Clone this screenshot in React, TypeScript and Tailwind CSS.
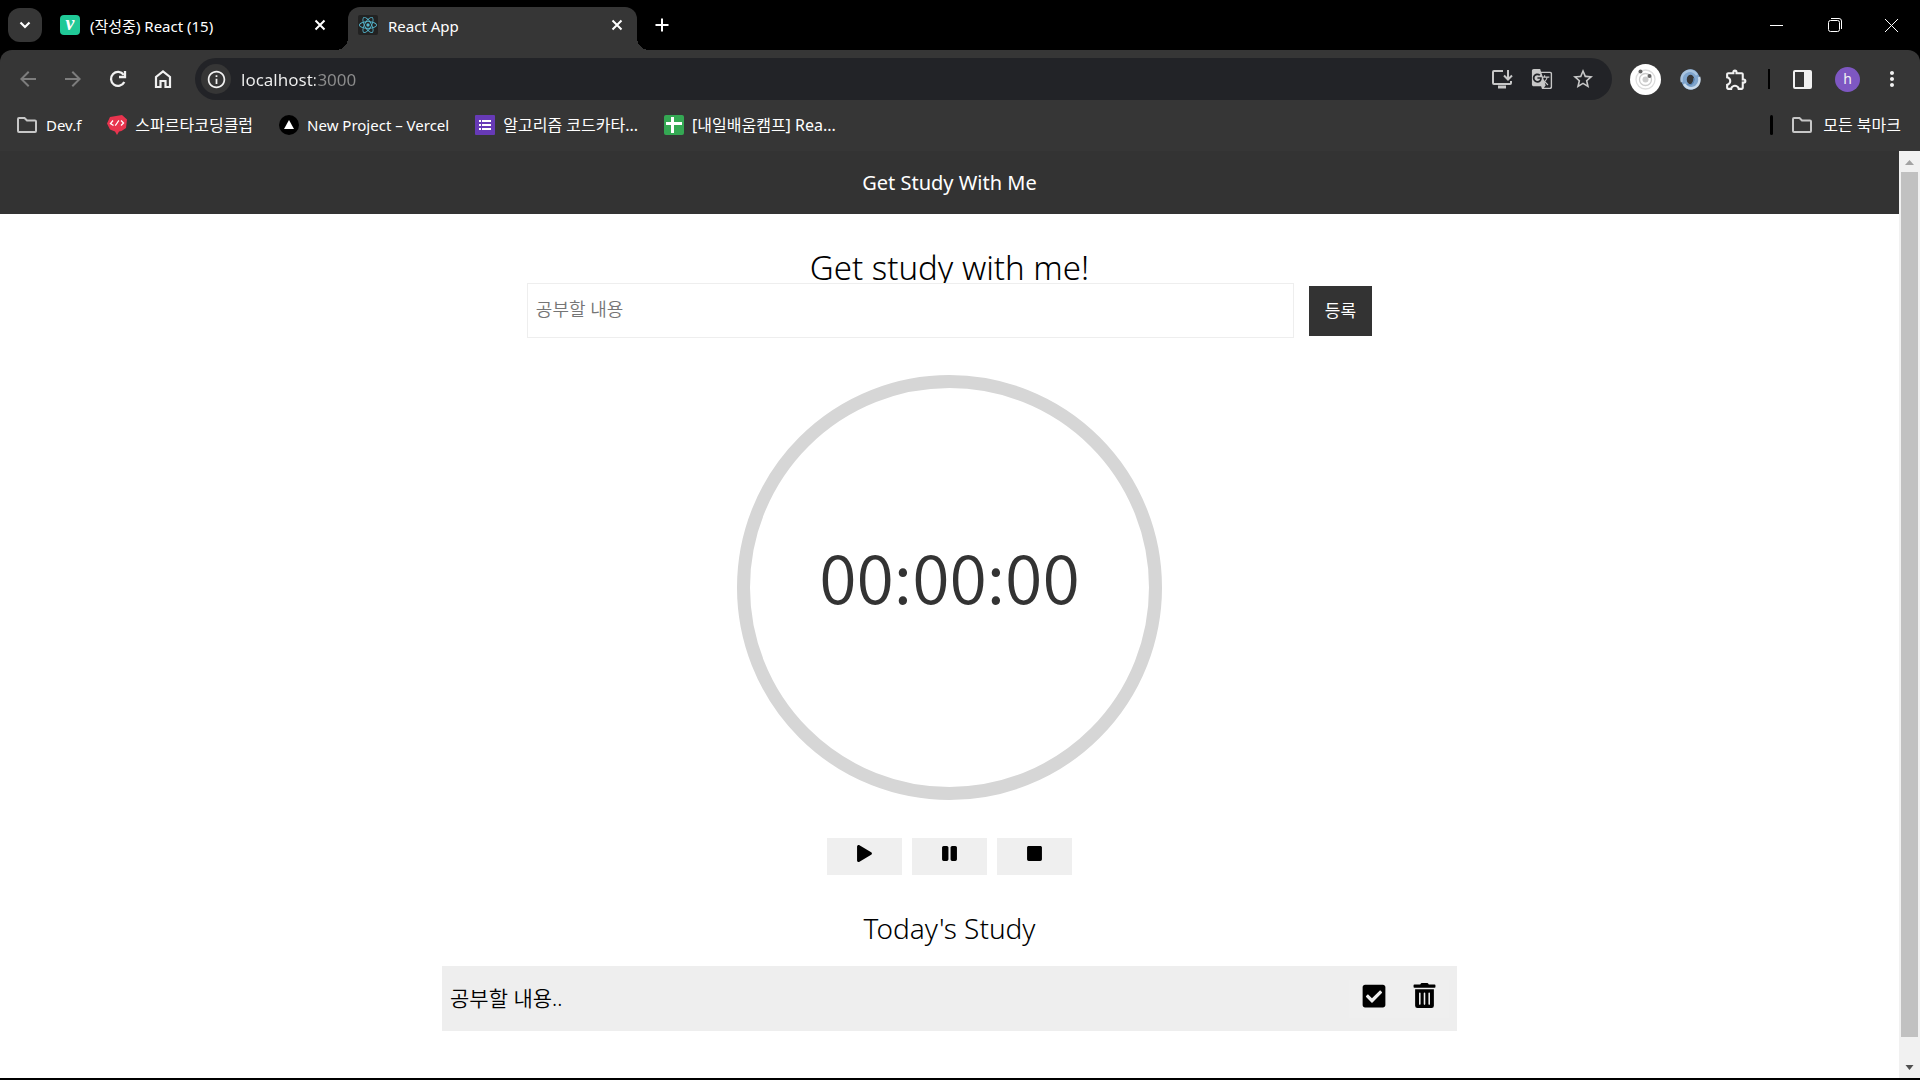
import React, { useState } from 'react';
import { FaPlay, FaPause, FaStop, FaCheckSquare, FaTrashAlt } from 'react-icons/fa';
import {
  MdArrowBack,
  MdArrowForward,
  MdOutlineInfo,
  MdStarBorder,
  MdOutlineExtension,
  MdMoreVert,
  MdGTranslate,
} from 'react-icons/md';
import { SiReact } from 'react-icons/si';

const CloseIcon = () => (
  <svg width="16" height="16" viewBox="0 0 16 16" fill="none" stroke="currentColor" strokeWidth="2">
    <path d="m3.500 3.500 9 9M12.500 3.500l-9 9" />
  </svg>
);

const ReloadIcon = () => (
  <svg width="24" height="24" viewBox="0 0 24 24" fill="none" stroke="currentColor" strokeWidth="2.300">
    <path d="M18.300 15a7 7 0 1 1-.6-7.200" />
    <path d="M19 4v6h-6" />
  </svg>
);

const HomeIcon = () => (
  <svg width="24" height="24" viewBox="0 0 24 24" fill="none" stroke="currentColor" strokeWidth="2.200">
    <path d="M5 10v10h4.500v-6h5v6H19V10l-7-5.500z" />
  </svg>
);

const FolderIcon = () => (
  <svg width="22" height="18" viewBox="0 0 22 18" fill="none" stroke="#c7c7c7" strokeWidth="2">
    <path d="M2 3a1 1 0 0 1 1-1h5.500l2.500 2.500h8a1 1 0 0 1 1 1V15a1 1 0 0 1-1 1H3a1 1 0 0 1-1-1z" />
  </svg>
);

const InstallIcon = () => (
  <svg width="22" height="20" viewBox="0 0 22 20" fill="none" stroke="#c7c7c7" strokeWidth="2">
    <path d="M12 2H3a1 1 0 0 0-1 1v11a1 1 0 0 0 1 1h16a1 1 0 0 0 1-1v-2" />
    <path d="M17 1v9M13 6.500l4 4 4-4" />
    <path d="M7 18h8" strokeWidth="3" />
  </svg>
);

const RadarIcon = () => (
  <svg width="31" height="31" viewBox="0 0 31 31" fill="none">
    <circle cx="15.500" cy="15.500" r="15.500" fill="#fff" />
    <circle cx="15.500" cy="15.500" r="9.500" stroke="#ddd" strokeWidth="1.300" />
    <circle cx="15.500" cy="15.500" r="6" stroke="#ccc" strokeWidth="1.300" />
    <circle cx="15.500" cy="15.500" r="3" fill="#ccc" />
    <circle cx="10.500" cy="7.500" r="2" fill="#666" />
    <circle cx="19.500" cy="12" r="2" fill="#666" />
  </svg>
);

const SwirlIcon = () => (
  <svg width="21" height="21" viewBox="0 0 21 21" fill="none">
    <ellipse cx="10.500" cy="10.500" rx="6.500" ry="7.500" stroke="#7fa5cd" strokeWidth="5.500" />
    <path d="M2 13a8.500 8.500 0 0 1 6-11c4-1 7 1 9 4" stroke="#a9c4df" strokeWidth="2.500" />
    <path d="M19 8a8.500 8.500 0 0 1-6 11c-4 1-7-1-9-4" stroke="#c9dbec" strokeWidth="2.500" />
    <path d="M7 15c4 2 7 0 7-6" stroke="#5b87b5" strokeWidth="1.200" />
  </svg>
);

const SidePanelIcon = () => (
  <svg width="19" height="19" viewBox="0 0 19 19">
    <rect x="1" y="1" width="17" height="17" rx="1" fill="none" stroke="#f1f1f1" strokeWidth="2" />
    <path d="M11 1h7v17h-7z" fill="#f1f1f1" />
  </svg>
);

const SpartaIcon = () => (
  <svg width="20" height="20" viewBox="0 0 20 20" fill="none">
    <path d="M3 2 15 0l5 4.500-1 8.500-4.500 3-2.500.5-2 3.500-2-3.500-5-2L0 8.500z" fill="#e8344e" />
    <path d="M6 5.500 3.500 8.500 6.500 10.500M14 5.500l2.500 2.500L14 10.500M8 10.500C9.500 10 10.500 6.500 12 5.500" stroke="#fff" strokeWidth="1.300" />
  </svg>
);

const VercelIcon = () => (
  <svg width="20" height="20" viewBox="0 0 20 20">
    <circle cx="10" cy="10" r="10" />
    <path d="m10 5 5 9H5z" fill="#fff" />
  </svg>
);

const FormsIcon = () => (
  <svg width="20" height="20" viewBox="0 0 20 20">
    <rect width="20" height="20" rx="1" fill="#673ab7" />
    <path d="M4 5h2v2H4zM7 5h9v2H7zM4 9h2v2H4zM7 9h9v2H7zM4 13h2v2H4zM7 13h9v2H7z" fill="#fff" />
  </svg>
);

const SheetsIcon = () => (
  <svg width="20" height="20" viewBox="0 0 20 20">
    <rect width="20" height="20" rx="2" fill="#34a853" />
    <path d="M7 2h3v5h8v3h-8v8H7v-8H2V7h5z" fill="#fff" />
  </svg>
);

const bookmarks = [
  { label: 'Dev.f', icon: <FolderIcon />, size: 'text-[15px]' },
  { label: '스파르타코딩클럽', icon: <SpartaIcon />, size: 'text-base' },
  { label: 'New Project – Vercel', icon: <VercelIcon />, size: 'text-[15px]' },
  { label: '알고리즘 코드카타...', icon: <FormsIcon />, size: 'text-base' },
  { label: '[내일배움캠프] Rea...', icon: <SheetsIcon />, size: 'text-base' },
];

function TabBar() {
  return (
    <div className="flex h-[50px] items-end bg-black text-white">
      <button aria-label="Search tabs" className="mb-2 ml-2 flex h-[34px] w-[34px] items-center justify-center rounded-xl bg-[#363636]">
        <svg width="12" height="8" viewBox="0 0 12 8" fill="none" stroke="#fff" strokeWidth="2.200"><path d="m1.500 1.500 4.500 4.500 4.500-4.500" /></svg>
      </button>
      <div className="ml-[18px] flex h-[50px] w-[268px] items-center">
        <span className="flex h-5 w-5 items-center justify-center rounded-sm bg-[#20c997] pb-1 font-['Liberation_Serif',serif] text-xl font-bold leading-none italic">v</span>
        <span className="ml-[10px] flex-1 pt-0.5 text-[15px]">(작성중) React (15)</span>
        <button aria-label="Close tab"><CloseIcon /></button>
      </div>
      <div className="relative ml-5 flex h-[43px] w-[289px] items-center rounded-t-xl bg-[#363636] px-[10px] pb-[7px]">
        <span className="absolute bottom-0 -left-3 h-3 w-3 bg-[radial-gradient(circle_at_top_left,transparent_12px,#363636_12px)]" />
        <span className="absolute -right-3 bottom-0 h-3 w-3 bg-[radial-gradient(circle_at_top_right,transparent_12px,#363636_12px)]" />
        <span className="flex h-5 w-5 items-center justify-center rounded-xs bg-[#222]"><SiReact size={18} className="text-[#55b8d0]" /></span>
        <span className="ml-[10px] flex-1 pt-0.5 text-[15px]">React App</span>
        <button aria-label="Close tab" className="mr-0.5"><CloseIcon /></button>
      </div>
      <button aria-label="New tab" className="mb-[17px] ml-[17px]">
        <svg width="16" height="16" viewBox="0 0 16 16" stroke="#fff" strokeWidth="2"><path d="M8 1.500v13M1.500 8h13" /></svg>
      </button>
      <div className="mb-[17px] ml-auto flex items-center gap-[42px] pr-[21px]">
        <button aria-label="Minimize" className="flex h-4 w-4 items-center"><span className="h-px w-[13px] bg-white" /></button>
        <button aria-label="Restore">
          <svg width="14" height="14" viewBox="0 0 14 14" fill="none" stroke="#fff"><rect x=".5" y="2.500" width="11" height="11" rx="2" /><path d="M3 .5h8a2.500 2.500 0 0 1 2.500 2.500v8" /></svg>
        </button>
        <button aria-label="Close">
          <svg width="15" height="15" viewBox="0 0 15 15" stroke="#fff"><path d="m1 1 13 13M14 1 1 14" /></svg>
        </button>
      </div>
    </div>
  );
}

function Toolbar() {
  return (
    <div className="bg-black">
      <div className="flex h-[58px] items-center rounded-t-xl bg-[#363636] px-4 text-[#f1f1f1]">
        <div className="flex w-[179px] items-center gap-[21px]">
          <button aria-label="Back" className="text-[#7d7d7d]"><MdArrowBack size={24} /></button>
          <button aria-label="Forward" className="text-[#7d7d7d]"><MdArrowForward size={24} /></button>
          <button aria-label="Reload"><ReloadIcon /></button>
          <button aria-label="Home"><HomeIcon /></button>
        </div>
        <div className="flex h-[42px] flex-1 items-center rounded-full bg-[#222327] pr-[17px] pl-[6px]">
          <button aria-label="Site information" className="flex h-[30px] w-[30px] items-center justify-center rounded-full bg-[#363636]"><MdOutlineInfo size={21} /></button>
          {/* host is bright, port is dimmed */}
          <input
            aria-label="Address"
            defaultValue="localhost:3000"
            className="ml-[10px] h-8 min-w-0 flex-1 bg-[linear-gradient(90deg,#f1f1f1_74px,#8d8d8d_74px)] bg-clip-text text-[17px] text-transparent caret-white outline-none"
          />
          <div className="flex items-center gap-[18px] text-[#c7c7c7]">
            <button aria-label="Install app"><InstallIcon /></button>
            <button aria-label="Translate"><MdGTranslate size={22} /></button>
            <button aria-label="Bookmark this page"><MdStarBorder size={24} /></button>
          </div>
        </div>
        <div className="flex items-center pl-[18px]">
          <button aria-label="Tracker"><RadarIcon /></button>
          <button aria-label="Swirl" className="ml-[19px]"><SwirlIcon /></button>
          <button aria-label="Extensions" className="ml-[23px]"><MdOutlineExtension size={25} /></button>
          <span className="ml-[19px] h-5 w-0.5 bg-black" />
          <button aria-label="Side panel" className="ml-[23px]"><SidePanelIcon /></button>
          <button aria-label="Profile" className="ml-[23px] h-[25px] w-[25px] rounded-full bg-[#7e57c2] text-sm">h</button>
          <button aria-label="Menu" className="ml-5"><MdMoreVert size={24} /></button>
        </div>
      </div>
    </div>
  );
}

function BookmarkBar() {
  return (
    <nav className="flex h-[43px] items-center bg-[#363636] pr-[19px] pb-[9px] pl-4 text-white">
      <div className="flex items-center gap-[26px]">
        {bookmarks.map((b) => (
          <a key={b.label} href="#" className="flex items-center gap-2">
            {b.icon}
            <span className={b.size}>{b.label}</span>
          </a>
        ))}
      </div>
      <span className="ml-auto h-5 w-[3px] rounded-full bg-black" />
      <a href="#" className="ml-[18px] flex items-center gap-[10px]">
        <FolderIcon />
        <span className="text-base">모든 북마크</span>
      </a>
    </nav>
  );
}

function Scrollbar() {
  return (
    <div className="flex w-[21px] flex-col items-center bg-[#f1f1f1]">
      <svg width="21" height="21" viewBox="0 0 21 21" fill="#a3a3a3"><path d="m10.500 9 4.500 5H6z" /></svg>
      <div className="w-[17px] flex-1 bg-[#c1c1c1]" />
      <svg width="21" height="41" viewBox="0 0 21 41" fill="#505050"><path d="m10.500 33 4-5h-8z" /></svg>
    </div>
  );
}

export default function App() {
  const [content, setContent] = useState('');

  return (
    <div className="flex min-h-screen flex-col border-b-2 border-black bg-white font-['Noto_Sans','Noto_Sans_CJK_KR',sans-serif]">
      <TabBar />
      <Toolbar />
      <BookmarkBar />
      <div className="flex flex-1">
        <div className="flex flex-1 flex-col items-center pb-10">
          <header className="flex h-[63px] w-full items-center justify-center bg-[#333] text-[20px] text-white">Get Study With Me</header>
          {/* the form sits on the heading's descenders */}
          <h1 className="mt-8 h-[37px] text-[33px] leading-[44px] font-[350]">Get study with me!</h1>
          <form className="relative flex items-center gap-[15px]" onSubmit={(e) => e.preventDefault()}>
            <input
              aria-label="공부할 내용"
              value={content}
              onChange={(e) => setContent(e.target.value)}
              placeholder="공부할 내용"
              className="h-[55px] w-[767px] border border-[#eee] bg-white px-2 pb-1 text-[18px] font-[350] outline-none placeholder:text-[#757575]"
            />
            <button className="h-[50px] bg-[#333] px-4 text-[17px] text-white">등록</button>
          </form>
          <div className="mt-[37px] flex h-[425px] w-[425px] items-center justify-center rounded-full border-[13px] border-[#d6d6d6] pb-[26px]">
            <span className="font-['Noto_Sans_CJK_KR',sans-serif] text-[68px] leading-none font-[350] text-[#333]">00:00:00</span>
          </div>
          <div className="mt-[38px] flex gap-[10px]">
            <button aria-label="Start" className="flex h-[37px] w-[75px] justify-center bg-[#efefef] pt-[7px]"><FaPlay size={17} /></button>
            <button aria-label="Pause" className="flex h-[37px] w-[75px] justify-center bg-[#efefef] pt-[7px]"><FaPause size={17} /></button>
            <button aria-label="Stop" className="flex h-[37px] w-[75px] justify-center bg-[#efefef] pt-[7px]"><FaStop size={17} /></button>
          </div>
          <h2 className="mt-8 text-[28px] leading-[42px] font-[350]">Today's Study</h2>
          <ul className="mt-[17px] w-[1015px]">
            <li className="flex h-[65px] items-center bg-[#eee] pr-2 pl-2">
              <span className="flex-1 text-[21px] font-[350]">공부할 내용..</span>
              <button aria-label="Done" className="flex h-[38px] w-[50px] items-center justify-center bg-[#efefef] pb-1.5"><FaCheckSquare size={26} /></button>
              <button aria-label="Delete" className="flex h-[38px] w-[50px] items-center justify-center bg-[#efefef] pb-1.5"><FaTrashAlt size={25} /></button>
            </li>
          </ul>
        </div>
        <Scrollbar />
      </div>
    </div>
  );
}
